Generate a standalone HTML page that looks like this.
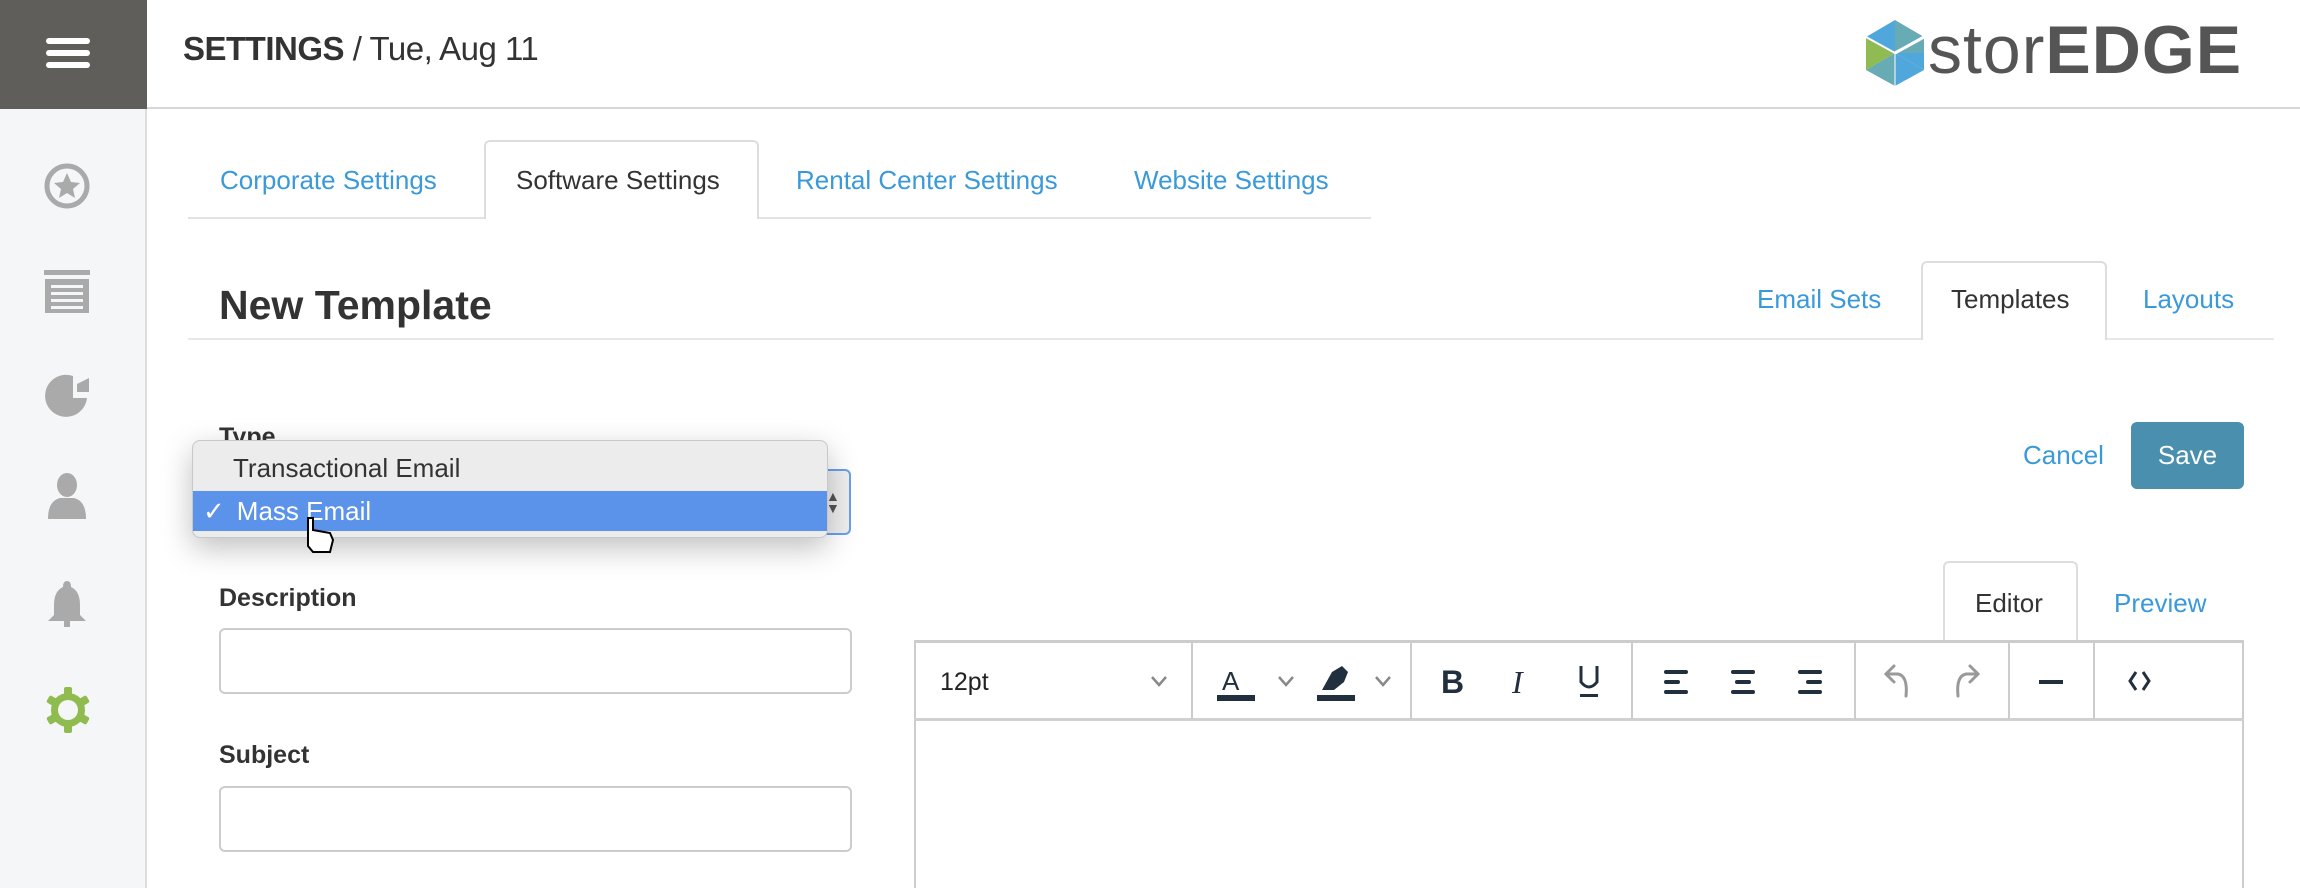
<!DOCTYPE html>
<html><head><meta charset="utf-8">
<style>
*{box-sizing:border-box;margin:0;padding:0}
html,body{width:2300px;height:888px;overflow:hidden}
body{background:#fff;font-family:"Liberation Sans",Arial,sans-serif;position:relative;color:#333}
.a{position:absolute}
.blue{color:#3a9ad9}
.t{font-size:26px;white-space:nowrap}
.lbl{font-size:25px;font-weight:bold;color:#333}
.inp{border:2px solid #ccc;border-radius:6px;background:#fff}
</style></head><body>
<!-- header -->
<div class="a" style="left:0;top:0;width:147px;height:109px;background:#5f5e5b"></div>
<div class="a" style="left:46px;top:38px;width:44px;height:6px;background:#fff;border-radius:3px"></div>
<div class="a" style="left:46px;top:50px;width:44px;height:6px;background:#fff;border-radius:3px"></div>
<div class="a" style="left:46px;top:62px;width:44px;height:6px;background:#fff;border-radius:3px"></div>
<div class="a" style="left:147px;top:107px;width:2153px;height:2px;background:#d6d6d6"></div>
<div class="a" style="left:183px;top:30px;font-size:33px;color:#333;white-space:nowrap;letter-spacing:-0.5px"><b>SETTINGS</b> / Tue, Aug 11</div>
<!-- logo -->
<svg class="a" style="left:1866px;top:20px" width="58" height="66" viewBox="0 0 58 66">
<polygon points="29,0 0,17 29,33" fill="#4fa7dc"/>
<polygon points="29,0 58,17 29,33" fill="#67abb5"/>
<polygon points="0,17 29,33 0,50" fill="#8fbb52"/>
<polygon points="58,17 29,33 58,33" fill="#67abb5"/>
<polygon points="58,33 29,33 58,50" fill="#4fa7dc"/>
<polygon points="0,50 29,33 29,66" fill="#67abb5"/>
<polygon points="58,50 29,33 29,66" fill="#4fa7dc"/>
<line x1="29" y1="33" x2="58" y2="17" stroke="#fff" stroke-width="3"/>
<line x1="29" y1="33" x2="0" y2="17" stroke="#fff" stroke-width="2"/>
<line x1="29" y1="33" x2="29" y2="66" stroke="#fff" stroke-width="1"/>
</svg>
<div class="a" style="left:1928px;top:10px;font-size:68px;color:#555;white-space:nowrap;line-height:80px"><span style="font-weight:300;letter-spacing:1px">stor</span><b style="letter-spacing:1px">EDGE</b></div>
<!-- sidebar -->
<div class="a" style="left:0;top:109px;width:147px;height:779px;background:#f5f6f8;border-right:2px solid #ddd"></div>
<svg class="a" style="left:43px;top:162px" width="48" height="48" viewBox="0 0 48 48"><circle cx="24" cy="24" r="20" fill="none" stroke="#aaa" stroke-width="5"/><polygon points="24,11 28,20 37,21 30,27 32,36 24,31 16,36 18,27 11,21 20,20" fill="#aaa"/></svg>
<svg class="a" style="left:43px;top:270px" width="48" height="44" viewBox="0 0 48 44"><rect x="1" y="0" width="46" height="5" fill="#aaa"/><rect x="2" y="9" width="44" height="34" fill="#aaa"/><rect x="8" y="15" width="32" height="3" fill="#f5f6f8"/><rect x="8" y="22" width="32" height="3" fill="#f5f6f8"/><rect x="8" y="29" width="32" height="3" fill="#f5f6f8"/><rect x="8" y="36" width="32" height="3" fill="#f5f6f8"/></svg>
<svg class="a" style="left:45px;top:372px" width="46" height="48" viewBox="0 0 46 48"><path d="M28 4 A21 21 0 1 0 42 26 L28 26 Z" fill="#aaa"/><path d="M32 12 L44 6 L44 20 L32 20Z" fill="#aaa"/></svg>
<svg class="a" style="left:46px;top:473px" width="42" height="48" viewBox="0 0 42 48"><ellipse cx="21" cy="12" rx="10" ry="12" fill="#aaa"/><path d="M2 46 Q2 28 14 25 L28 25 Q40 28 40 46Z" fill="#aaa"/></svg>
<svg class="a" style="left:46px;top:579px" width="42" height="50" viewBox="0 0 42 50"><path d="M21 2 Q25 2 25 8 Q34 12 34 26 L34 36 L40 42 L2 42 L8 36 L8 26 Q8 12 17 8 Q17 2 21 2Z" fill="#aaa"/><rect x="18" y="42" width="6" height="6" fill="#aaa"/></svg>
<svg class="a" style="left:44px;top:686px" width="48" height="48" viewBox="0 0 48 48"><g fill="#8fbb4f"><circle cx="24" cy="24" r="17"/><rect x="20" y="1" width="8" height="46" rx="2"/><rect x="20" y="1" width="8" height="46" rx="2" transform="rotate(60 24 24)"/><rect x="20" y="1" width="8" height="46" rx="2" transform="rotate(120 24 24)"/></g><circle cx="24" cy="24" r="10" fill="#f5f6f8"/></svg>
<!-- top tabs -->
<div class="a" style="left:188px;top:217px;width:1183px;height:2px;background:#e2e2e2"></div>
<div class="a" style="left:484px;top:140px;width:275px;height:79px;background:#fff;border:2px solid #ddd;border-bottom:none;border-radius:6px 6px 0 0"></div>
<div class="a t blue" style="left:220px;top:165px">Corporate Settings</div>
<div class="a t" style="left:516px;top:165px;color:#333">Software Settings</div>
<div class="a t blue" style="left:796px;top:165px">Rental Center Settings</div>
<div class="a t blue" style="left:1134px;top:165px">Website Settings</div>
<!-- New Template -->
<div class="a" style="left:219px;top:282px;font-size:41px;font-weight:bold;color:#333;white-space:nowrap">New Template</div>
<div class="a" style="left:188px;top:338px;width:2086px;height:2px;background:#e8e8e8"></div>
<div class="a" style="left:1921px;top:261px;width:186px;height:79px;background:#fff;border:2px solid #ddd;border-bottom:none;border-radius:6px 6px 0 0"></div>
<div class="a t blue" style="left:1757px;top:284px">Email Sets</div>
<div class="a t" style="left:1951px;top:284px;color:#333">Templates</div>
<div class="a t blue" style="left:2143px;top:284px">Layouts</div>
<!-- form -->
<div class="a lbl" style="left:219px;top:423px">Type</div>
<div class="a" style="left:219px;top:469px;width:632px;height:66px;border:2px solid #6aa0e8;border-radius:6px;background:#eee"></div>
<div class="a" style="left:826px;top:490px;font-size:14px;color:#555;line-height:12px">▲<br>▼</div>
<div class="a" style="left:192px;top:440px;width:636px;height:98px;background:#ececec;border:1px solid #c8c8c8;border-radius:8px;box-shadow:0 10px 30px rgba(0,0,0,.25);overflow:hidden">
  <div style="position:absolute;left:40px;top:12px;font-size:26px;color:#333">Transactional Email</div>
  <div style="position:absolute;left:0;top:50px;width:100%;height:40px;background:#5b92ea;color:#fff;font-size:26px;line-height:40px"><span style="margin-left:10px">✓</span><span style="margin-left:12px">Mass Email</span></div>
</div>
<div class="a lbl" style="left:219px;top:584px">Description</div>
<div class="a inp" style="left:219px;top:628px;width:633px;height:66px"></div>
<div class="a lbl" style="left:219px;top:741px">Subject</div>
<div class="a inp" style="left:219px;top:786px;width:633px;height:66px"></div>
<!-- buttons -->
<div class="a t blue" style="left:2023px;top:440px">Cancel</div>
<div class="a" style="left:2131px;top:422px;width:113px;height:67px;background:#4a8fae;border-radius:6px;color:#fff;font-size:26px;text-align:center;line-height:67px">Save</div>
<!-- editor tabs -->
<div class="a" style="left:1943px;top:561px;width:135px;height:81px;background:#fff;border:2px solid #ddd;border-bottom:none;border-radius:6px 6px 0 0"></div>
<div class="a t" style="left:1975px;top:588px;color:#333">Editor</div>
<div class="a t blue" style="left:2114px;top:588px">Preview</div>
<!-- editor box -->
<div class="a" style="left:914px;top:640px;width:1330px;height:248px;border:2px solid #ccc;border-top:3px solid #ccc;border-bottom:none"></div>
<div class="a" style="left:914px;top:718px;width:1330px;height:3px;background:#d0d0d0"></div>
<div class="a" style="left:1191px;top:642px;width:2px;height:77px;background:#ccc"></div>
<div class="a" style="left:1410px;top:642px;width:2px;height:77px;background:#ccc"></div>
<div class="a" style="left:1631px;top:642px;width:2px;height:77px;background:#ccc"></div>
<div class="a" style="left:1854px;top:642px;width:2px;height:77px;background:#ccc"></div>
<div class="a" style="left:2008px;top:642px;width:2px;height:77px;background:#ccc"></div>
<div class="a" style="left:2093px;top:642px;width:2px;height:77px;background:#ccc"></div>
<div class="a" style="left:940px;top:668px;font-size:25px;color:#222">12pt</div>
<svg class="a" style="left:0;top:0" width="2300" height="888">
<g fill="none" stroke="#888" stroke-width="2.5">
<path d="M1152 677 L1159 685 L1166 677"/><path d="M1279 677 L1286 685 L1293 677"/><path d="M1376 677 L1383 685 L1390 677"/>
</g>
<g fill="#222f3e">
<text x="1222" y="690" font-size="26" font-family="Liberation Sans" fill="#222f3e">A</text>
<rect x="1217" y="695" width="38" height="6"/>
<rect x="1317" y="695" width="38" height="6"/>
<path d="M1322 690 L1332 672 L1342 666 L1348 672 L1344 682 L1334 690Z"/>
<text x="1441" y="693" font-size="32" font-weight="bold" font-family="Liberation Sans">B</text>
<text x="1512" y="693" font-size="32" font-style="italic" font-family="Liberation Serif">I</text>
<rect x="1664" y="670" width="24" height="4" rx="2"/><rect x="1664" y="680" width="16" height="4" rx="2"/><rect x="1664" y="690" width="24" height="4" rx="2"/>
<rect x="1731" y="670" width="24" height="4" rx="2"/><rect x="1735" y="680" width="16" height="4" rx="2"/><rect x="1731" y="690" width="24" height="4" rx="2"/>
<rect x="1798" y="670" width="24" height="4" rx="2"/><rect x="1806" y="680" width="16" height="4" rx="2"/><rect x="1798" y="690" width="24" height="4" rx="2"/>
<rect x="2039" y="680" width="24" height="4"/>
</g>
<path d="M1581 666 L1581 682 Q1589 692 1597 682 L1597 666" fill="none" stroke="#222f3e" stroke-width="3"/>
<rect x="1580" y="694" width="18" height="3" fill="#222f3e"/>
<g fill="none" stroke="#999" stroke-width="3" stroke-linecap="round">
<path d="M1894 666 L1886 674 L1894 682"/><path d="M1887 674 L1898 674 Q1908 676 1906 696"/>
<path d="M1970 666 L1978 674 L1970 682"/><path d="M1977 674 L1966 674 Q1956 676 1958 696"/>
</g>
<g fill="none" stroke="#222f3e" stroke-width="3"><path d="M2136 672 L2130 681 L2136 690"/><path d="M2143 672 L2149 681 L2143 690"/></g>
<path d="M308 518 L308 546 L313 552 L330 552 L333 540 L330 533 L313 530 L313 518 Z" fill="#fff" stroke="#000" stroke-width="2"/>
</svg>
</body></html>
